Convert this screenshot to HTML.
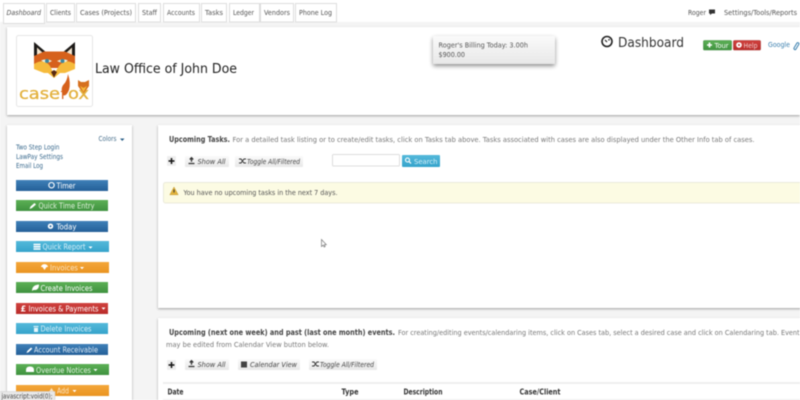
<!DOCTYPE html>
<html><head><meta charset="utf-8"><style>
html,body{margin:0;padding:0;background:#fff;width:800px;height:400px;overflow:hidden}
svg{display:block;filter:blur(.45px)}
text{font-family:"DejaVu Sans","Liberation Sans",sans-serif}
.t{font-size:7.3px;fill:#555}
.b{font-size:7.7px;fill:#fff;text-anchor:middle}
.m{font-size:7.3px;fill:#777}
.h{font-size:7.5px;font-weight:bold;fill:#333}
</style></head><body>
<svg width="800" height="400" viewBox="0 0 800 400" xmlns="http://www.w3.org/2000/svg">
<defs>
<linearGradient id="bl" x1="0" y1="0" x2="0" y2="1"><stop offset="0" stop-color="#3f80b8"/><stop offset="1" stop-color="#245f98"/></linearGradient>
<linearGradient id="gr" x1="0" y1="0" x2="0" y2="1"><stop offset="0" stop-color="#5cb056"/><stop offset="1" stop-color="#3f923f"/></linearGradient>
<linearGradient id="cy" x1="0" y1="0" x2="0" y2="1"><stop offset="0" stop-color="#54b9da"/><stop offset="1" stop-color="#35a3cb"/></linearGradient>
<linearGradient id="or" x1="0" y1="0" x2="0" y2="1"><stop offset="0" stop-color="#f3a63a"/><stop offset="1" stop-color="#ea9420"/></linearGradient>
<linearGradient id="rd" x1="0" y1="0" x2="0" y2="1"><stop offset="0" stop-color="#d0413e"/><stop offset="1" stop-color="#b92c2a"/></linearGradient>
<linearGradient id="gy" x1="0" y1="0" x2="0" y2="1"><stop offset="0" stop-color="#fafafa"/><stop offset="1" stop-color="#e8e8e8"/></linearGradient>
<filter id="sh" x="-10%" y="-10%" width="120%" height="125%"><feDropShadow dx="0" dy="1" stdDeviation="1" flood-color="#000" flood-opacity=".35"/></filter>
<filter id="sh2" x="-10%" y="-20%" width="120%" height="150%"><feDropShadow dx="0" dy="2" stdDeviation="2" flood-color="#000" flood-opacity=".45"/></filter>
</defs>

<rect x="0" y="22" width="800" height="378" fill="#f4f4f4"/>
<rect x="0" y="0" width="800" height="22" fill="#fff"/>

<!-- tabs -->
<g fill="#fff" stroke="#ddd" stroke-width="1">
<rect x="3.500" y="3.500" width="41" height="20" fill="#fff"/>
<rect x="46.500" y="3.500" width="28" height="18.500"/>
<rect x="76.500" y="3.500" width="59" height="18.500"/>
<rect x="138.500" y="3.500" width="22" height="18.500"/>
<rect x="163.500" y="3.500" width="36" height="18.500"/>
<rect x="201.500" y="3.500" width="25" height="18.500"/>
<rect x="229.500" y="3.500" width="30" height="18.500"/>
<rect x="260.500" y="3.500" width="33" height="18.500"/>
<rect x="295.500" y="3.500" width="41" height="18.500"/>
</g>
<text x="6.500" y="15" font-size="7.300" fill="#555" textLength="34.500" lengthAdjust="spacingAndGlyphs" style="font-style:italic">Dashboard</text>
<text class="t" x="50" y="15" textLength="21" lengthAdjust="spacingAndGlyphs">Clients</text>
<text class="t" x="80" y="15" textLength="52" lengthAdjust="spacingAndGlyphs">Cases (Projects)</text>
<text class="t" x="142" y="15" textLength="15" lengthAdjust="spacingAndGlyphs">Staff</text>
<text class="t" x="167" y="15" textLength="28" lengthAdjust="spacingAndGlyphs">Accounts</text>
<text class="t" x="205" y="15" textLength="18" lengthAdjust="spacingAndGlyphs">Tasks</text>
<text class="t" x="233" y="15" textLength="21" lengthAdjust="spacingAndGlyphs">Ledger</text>
<text class="t" x="264" y="15" textLength="26" lengthAdjust="spacingAndGlyphs">Vendors</text>
<text class="t" x="299" y="15" textLength="33" lengthAdjust="spacingAndGlyphs">Phone Log</text>
<text class="t" x="688" y="15" textLength="18" lengthAdjust="spacingAndGlyphs">Roger</text>
<text class="t" x="724" y="15" textLength="73" lengthAdjust="spacingAndGlyphs">Settings/Tools/Reports</text>
<path d="M709 9.500h6v4h-3l-2 1.500v-1.500h-1z" fill="#333"/>

<!-- header panel -->
<rect x="7" y="27" width="793" height="88" fill="#fff" filter="url(#sh)"/>
<rect x="16.500" y="35.500" width="76" height="71" rx="2" fill="#fff" stroke="#e6e6e6"/>

<!-- logo -->
<path d="M34 42L47 53L40 58L34 56Z" fill="#1d1a18"/>
<path d="M75 42L62 53L69 58L75 56Z" fill="#1d1a18"/>
<path d="M37 47.500L43 53L37 55Z" fill="#f5e7d0"/>
<path d="M72 47.500L66 53L72 55Z" fill="#f5e7d0"/>
<path d="M34 56L44 51.500H65L75 56V68H34Z" fill="#d6611c"/>
<path d="M34 64Q44 58 50 66L54 74L59 66Q65 58 75 64V69L65 73H60L54 78L48 73H44L34 69Z" fill="#f6bb3c"/>
<path d="M51 72L54 77.500L57 72L54 70Z" fill="#5a2a12"/>
<path d="M41 60.500Q47 58 52 61Q47 64.500 41 60.500Z" fill="#eaf0df"/>
<path d="M57 61Q63 58 68 60.500Q63 64.500 57 61Z" fill="#eaf0df"/>
<circle cx="47" cy="61" r="2" fill="#3d86a0"/>
<circle cx="62.500" cy="61" r="2" fill="#3d86a0"/>
<path d="M68 74Q71 83 69 90Q66 97 63 95Q60 88 64 84Q67 81 68 74Z" fill="#d6611c"/>
<path d="M78 80L81 82H85L89 80L89 86L83.500 94L78 86Z" fill="#d6701f"/>
<path d="M80 86L83.500 92L87 86L83.500 88Z" fill="#f6bb3c"/>
<text x="19" y="99" font-size="16" fill="#e3b13d" stroke="#e3b13d" stroke-width=".3" textLength="41" lengthAdjust="spacingAndGlyphs">case</text>
<text x="60.500" y="99" font-size="14" fill="#d6611c" textLength="5" lengthAdjust="spacingAndGlyphs">f</text>
<text x="68" y="99" font-size="16" fill="#e3b13d" stroke="#e3b13d" stroke-width=".3" textLength="21" lengthAdjust="spacingAndGlyphs">ox</text>

<text x="95" y="73" font-size="13.200" fill="#222" textLength="142" lengthAdjust="spacingAndGlyphs">Law Office of John Doe</text>

<!-- billing -->
<rect x="433" y="36" width="122" height="28" rx="1.500" fill="url(#gy)" filter="url(#sh2)"/>
<text class="t" x="438.500" y="47.500" textLength="89.500" lengthAdjust="spacingAndGlyphs">Roger's Billing Today: 3.00h</text>
<text class="t" x="438.500" y="57" textLength="26.500" lengthAdjust="spacingAndGlyphs">$900.00</text>

<!-- dashboard title -->
<circle cx="607" cy="41.500" r="5" fill="#fff" stroke="#222" stroke-width="1.600"/>
<path d="M605 40l2 2" stroke="#222" stroke-width="1.200"/><circle cx="609" cy="39.800" r=".8" fill="#222"/>
<text x="618" y="47" font-size="13.500" fill="#333" textLength="66" lengthAdjust="spacingAndGlyphs">Dashboard</text>

<rect x="703.500" y="40.500" width="28" height="9.500" rx="1" fill="url(#gr)" stroke="#3c8a3c" stroke-width=".6"/>
<path d="M707 45h5M709.500 42.500v5" stroke="#fff" stroke-width="1.600"/>
<text x="714.500" y="48" font-size="7" fill="#fff" textLength="14" lengthAdjust="spacingAndGlyphs">Tour</text>
<rect x="733.500" y="40.500" width="27" height="9.500" rx="1" fill="url(#rd)" stroke="#a32a28" stroke-width=".6"/>
<circle cx="739" cy="45" r="2.800" fill="#fff"/><circle cx="739" cy="45" r="1" fill="#c33"/>
<text x="743.500" y="48" font-size="7" fill="#f3d0d0" textLength="14" lengthAdjust="spacingAndGlyphs">Help</text>
<text x="768" y="47" font-size="7.300" fill="#3a7fae" textLength="22" lengthAdjust="spacingAndGlyphs">Google</text>
<path d="M794 48l3-5a1.200 1.200 0 0 1 2 1l-3 5a1 1 0 0 1-2-1z" fill="none" stroke="#3a7fae" stroke-width="1"/>

<!-- sidebar -->
<rect x="7" y="125" width="125" height="290" fill="#fff" filter="url(#sh)"/>
<text x="98.500" y="141" font-size="7" fill="#476f8c" textLength="18" lengthAdjust="spacingAndGlyphs">Colors</text>
<path d="M120 138.500h4.500l-2.250 2.500z" fill="#2a5f88"/>
<text x="16" y="149.500" font-size="7" fill="#3a6a8e" textLength="43.500" lengthAdjust="spacingAndGlyphs">Two Step Login</text>
<text x="16" y="159" font-size="7" fill="#3a6a8e" textLength="47" lengthAdjust="spacingAndGlyphs">LawPay Settings</text>
<text x="16" y="168" font-size="7" fill="#3a6a8e" textLength="27" lengthAdjust="spacingAndGlyphs">Email Log</text>

<!-- side buttons -->
<rect x="16" y="180" width="92" height="11" fill="url(#bl)"/>
<circle cx="51.500" cy="185.200" r="2.700" fill="none" stroke="#fff" stroke-width="1.100"/>
<text class="b" x="66" y="188.500" textLength="19" lengthAdjust="spacingAndGlyphs">Timer</text>

<rect x="16" y="200" width="92" height="11" fill="url(#gr)"/>
<path d="M29.500 209l1-2.500 4-3.500 1.500 1.500-4 3.500z" fill="#fff"/>
<text class="b" x="66.500" y="208.500" textLength="56" lengthAdjust="spacingAndGlyphs" style="fill:#dff0da">Quick Time Entry</text>

<rect x="16" y="221" width="92" height="11" fill="url(#bl)"/>
<circle cx="50.500" cy="226.200" r="2.700" fill="#fff"/><circle cx="50.500" cy="226.200" r="1" fill="#2c6aa3"/>
<text class="b" x="66.500" y="229.500" textLength="20" lengthAdjust="spacingAndGlyphs">Today</text>

<rect x="16" y="241" width="93" height="11" fill="url(#cy)"/>
<path d="M33.500 243.800h7v1.500h-7zM33.500 246h7v1.500h-7zM33.500 248.200h7v1.500h-7z" fill="#fff"/>
<text class="b" x="64" y="249.500" textLength="43" lengthAdjust="spacingAndGlyphs" style="fill:#d6eff8">Quick Report</text>
<path d="M88.500 246.500h4l-2 2.200z" fill="#fff"/>

<rect x="16" y="262" width="93" height="11" fill="url(#or)"/>
<path d="M41 267a3 2.500 0 0 1 7 0h-1.500l-2 3-2-3z" fill="#fff"/>
<text class="b" x="64" y="270.500" textLength="28" lengthAdjust="spacingAndGlyphs" style="fill:#fbe5c4">Invoices</text>
<path d="M80 267h4l-2 2.200z" fill="#fff"/>

<rect x="16" y="282" width="92" height="11" fill="url(#gr)"/>
<path d="M32 291q0-6 7-6.500q0 6-5.500 5.500z" fill="#fff"/>
<text class="b" x="66.500" y="291" textLength="52" lengthAdjust="spacingAndGlyphs">Create Invoices</text>

<rect x="16" y="303" width="92" height="11" fill="url(#rd)"/>
<text x="20.500" y="311.500" font-size="8" font-weight="bold" fill="#fff">£</text>
<text class="b" x="63.500" y="311.500" textLength="70" lengthAdjust="spacingAndGlyphs">Invoices &amp; Payments</text>
<path d="M101.500 307.500h4l-2 2.200z" fill="#fff"/>

<rect x="16" y="323" width="92" height="11" fill="url(#cy)"/>
<path d="M33.500 326h5v1h-5zM34 327.800h4v4.200h-4z" fill="#e6f6fb"/>
<text class="b" x="66" y="331.500" textLength="51" lengthAdjust="spacingAndGlyphs" style="fill:#d6eff8">Delete Invoices</text>

<rect x="16" y="344" width="92" height="11" fill="url(#bl)"/>
<path d="M26.500 353l.8-2 3.800-3.500 1.200 1.200-3.800 3.500z" fill="#fff"/>
<text class="b" x="66" y="352.500" textLength="64" lengthAdjust="spacingAndGlyphs" style="fill:#dbe8f4">Account Receivable</text>

<rect x="16" y="364" width="93" height="11" fill="url(#gr)"/>
<path d="M26 370q0-3.500 4-3.500t4 3.500v2h-8z" fill="#fff"/>
<text class="b" x="63.500" y="373" textLength="55" lengthAdjust="spacingAndGlyphs" style="fill:#e2f2df">Overdue Notices</text>
<path d="M93.500 369h4l-2 2.200z" fill="#fff"/>

<rect x="16" y="385" width="93" height="11" fill="url(#or)"/>
<path d="M49 392l2.500-4 2.500 4z" fill="#fbe5c4"/>
<text class="b" x="63" y="393.500" textLength="12" lengthAdjust="spacingAndGlyphs" style="fill:#fbe5c4">Add</text>
<path d="M72.500 390h4l-2 2.200z" fill="#fff"/>

<!-- main panel 1 -->
<rect x="158" y="125" width="650" height="183" fill="#fff" filter="url(#sh)"/>
<text class="h" x="169" y="142" textLength="61" lengthAdjust="spacingAndGlyphs" style="fill:#444">Upcoming Tasks.</text>
<text class="m" x="232.500" y="142" textLength="522" lengthAdjust="spacingAndGlyphs">For a detailed task listing or to create/edit tasks, click on Tasks tab above. Tasks associated with cases are also displayed under the Other Info tab of cases.</text>

<rect x="167" y="156" width="9" height="10" rx="1" fill="#eee"/>
<path d="M168.500 161h6M171.500 158v6" stroke="#111" stroke-width="1.500"/>
<rect x="185" y="156" width="44" height="11" rx="1" fill="url(#gy)"/>
<path d="M191.500 157.800v4M189.800 159.500l1.700-1.800 1.700 1.800M188.500 163.500h6" stroke="#333" stroke-width="1.300" fill="none"/>
<text x="197.500" y="164" font-size="7.300" style="font-style:italic" fill="#444" textLength="28" lengthAdjust="spacingAndGlyphs">Show All</text>
<rect x="235" y="156" width="68" height="11" rx="1" fill="url(#gy)"/>
<path d="M239 159h2l3 4h2M239 163h2l3-4h2" stroke="#333" stroke-width="1" fill="none"/>
<text x="247" y="164" font-size="6.800" style="font-style:italic" fill="#444" textLength="53" lengthAdjust="spacingAndGlyphs">Toggle All/Filtered</text>
<rect x="332.500" y="154.500" width="67" height="11.500" rx="1" fill="#fff" stroke="#ddd"/>
<rect x="402" y="155" width="38" height="12" rx="1" fill="url(#cy)"/>
<circle cx="407.500" cy="160" r="2" fill="none" stroke="#fff" stroke-width="1.100"/><path d="M409 161.500l2 2" stroke="#fff" stroke-width="1.200"/>
<text x="414" y="163.800" font-size="7.300" fill="#d6eff8" textLength="23.500" lengthAdjust="spacingAndGlyphs">Search</text>

<rect x="163.500" y="182.500" width="640" height="20.500" rx="2" fill="#fcfbe3" stroke="#ebeadb"/>
<path d="M174 187l4.200 7.800h-8.400z" fill="#e2b33a" stroke="#b58a1f" stroke-width=".4"/><path d="M174 189.500v3" stroke="#333" stroke-width="1"/>
<text x="183.500" y="195.200" font-size="7.300" fill="#555" textLength="154" lengthAdjust="spacingAndGlyphs">You have no upcoming tasks in the next 7 days.</text>

<!-- cursor -->
<path d="M321.500 239.500v7l1.700-1.300 1 1.800 1-.5-.9-1.800h2z" fill="#fff" stroke="#777" stroke-width=".7"/>

<!-- main panel 2 -->
<rect x="158" y="318" width="650" height="90" fill="#fff" filter="url(#sh)"/>
<text class="h" x="169" y="335" textLength="226" lengthAdjust="spacingAndGlyphs" style="fill:#444">Upcoming (next one week) and past (last one month) events.</text>
<text class="m" x="398" y="335" textLength="405" lengthAdjust="spacingAndGlyphs">For creating/editing events/calendaring items, click on Cases tab, select a desired case and click on Calendaring tab. Events</text>
<text class="m" x="166" y="347" textLength="163" lengthAdjust="spacingAndGlyphs">may be edited from Calendar View button below.</text>

<rect x="167" y="360" width="9" height="10" rx="1" fill="#eee"/>
<path d="M168.500 365h6M171.500 362v6" stroke="#111" stroke-width="1.500"/>
<rect x="185" y="359" width="44" height="11" rx="1" fill="url(#gy)"/>
<path d="M191.500 360.800v4M189.800 362.500l1.700-1.800 1.700 1.800M188.500 366.500h6" stroke="#333" stroke-width="1.300" fill="none"/>
<text x="197.500" y="367" font-size="7.300" style="font-style:italic" fill="#444" textLength="28" lengthAdjust="spacingAndGlyphs">Show All</text>
<rect x="238" y="359" width="62" height="11" rx="1" fill="url(#gy)"/>
<rect x="241" y="361.500" width="6" height="6" fill="#444"/>
<text x="250" y="367" font-size="7.300" style="font-style:italic" fill="#444" textLength="47" lengthAdjust="spacingAndGlyphs">Calendar View</text>
<rect x="309" y="359" width="68" height="11" rx="1" fill="url(#gy)"/>
<path d="M312 362h2l3 4h2M312 366h2l3-4h2" stroke="#333" stroke-width="1" fill="none"/>
<text x="320" y="367" font-size="6.800" style="font-style:italic" fill="#444" textLength="54" lengthAdjust="spacingAndGlyphs">Toggle All/Filtered</text>

<rect x="163" y="382" width="640" height="2" fill="#eee"/>
<rect x="163" y="399" width="640" height="1" fill="#eee"/>
<text class="h" x="167.500" y="394.500" textLength="16" lengthAdjust="spacingAndGlyphs">Date</text>
<text class="h" x="341.500" y="394.500" textLength="17" lengthAdjust="spacingAndGlyphs">Type</text>
<text class="h" x="403.500" y="394.500" textLength="39" lengthAdjust="spacingAndGlyphs">Description</text>
<text class="h" x="519.500" y="394.500" textLength="41" lengthAdjust="spacingAndGlyphs">Case/Client</text>

<!-- status bar -->
<rect x="0" y="391.500" width="55" height="8.500" fill="#e9e9e9" stroke="#ccc" stroke-width=".5"/>
<text x="1.500" y="398.500" font-size="7.300" fill="#444" textLength="51" lengthAdjust="spacingAndGlyphs">javascript:void(0);</text>
</svg>
</body></html>
